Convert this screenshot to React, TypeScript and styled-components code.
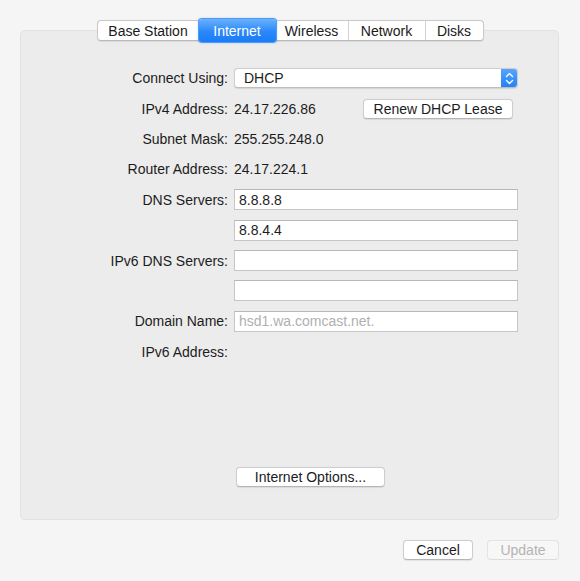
import React from "react";
import styled, { createGlobalStyle, css } from "styled-components";

const GlobalStyle = createGlobalStyle`
  html, body { margin: 0; padding: 0; background: #f5f5f5; }
  body {
    font-family: "Liberation Sans", Arial, sans-serif;
    font-size: 14px;
    color: #1c1c1c;
    -webkit-font-smoothing: antialiased;
  }
`;

const Window = styled.div`
  width: 580px;
  height: 581px;
  box-sizing: border-box;
  padding: 20px 21px 0 20px;
  display: flex;
  flex-direction: column;
  border-top: 1px solid #e6e6e6;
  margin-top: -1px;
`;

const TabBar = styled.div`
  align-self: center;
  margin-left: 1px;
  display: flex;
  height: 21px;
  box-sizing: border-box;
  background: #fff;
  border: 1px solid #c9c9c9;
  border-bottom-color: #b9b9b9;
  border-radius: 4px;
  position: relative;
  z-index: 1;
  box-shadow: 0 0.5px 1px rgba(0, 0, 0, 0.08);
`;

const Tab = styled.div<{ $w: number; $active?: boolean; $first?: boolean }>`
  width: ${(p) => p.$w}px;
  display: flex;
  align-items: center;
  justify-content: center;
  font-size: 14px;
  color: #1a1a1a;
  box-sizing: border-box;
  border-left: ${(p) => (p.$first ? "none" : "1px solid #d2d2d2")};
  ${(p) =>
    p.$active &&
    css`
      color: #fff;
      border-left: none;
      margin: -2px 0;
      border-radius: 3px;
      background: linear-gradient(#6bb1fb, #2a88fb 55%, #1b7cf6);
      box-shadow: 0 0 0 1px #4a9cf6, 0 0 2px 1px rgba(90, 160, 250, 0.45);
      position: relative;
    `}
`;

const Panel = styled.div`
  margin-top: -11px;
  height: 490px;
  box-sizing: border-box;
  background: #ececec;
  border: 1px solid #e2e2e2;
  border-radius: 5px;
  padding-top: 32px;
  display: flex;
  flex-direction: column;
`;

const Form = styled.div`
  display: grid;
  grid-template-columns: 207px 284px;
  grid-auto-rows: 30.4px;
  column-gap: 6px;
  align-items: center;
`;

const Label = styled.div`
  text-align: right;
  white-space: nowrap;
`;

const Value = styled.div`
  display: flex;
  align-items: center;
  white-space: nowrap;
`;

const Popup = styled.div`
  height: 20px;
  width: 284px;
  box-sizing: border-box;
  display: flex;
  align-items: center;
  background: #fff;
  border: 1px solid #cfcfcf;
  border-bottom-color: #bdbdbd;
  border-radius: 4px;
  box-shadow: 0 0.5px 1px rgba(0, 0, 0, 0.1);
  padding-left: 9px;
  position: relative;
  overflow: hidden;
`;

const PopupText = styled.span`
  flex: 1;
`;

const Stepper = styled.div`
  width: 17px;
  height: 20px;
  margin: -1px -1px -1px 0;
  background: linear-gradient(#5aa7fb, #1f80f7);
  border-radius: 0 4px 4px 0;
  display: flex;
  align-items: center;
  justify-content: center;
`;

const PushButton = styled.button<{ $w: number; $disabled?: boolean }>`
  width: ${(p) => p.$w}px;
  height: 20px;
  padding: 0;
  font-family: inherit;
  font-size: 14px;
  color: ${(p) => (p.$disabled ? "#b4b4b4" : "#1c1c1c")};
  background: ${(p) => (p.$disabled ? "#f7f7f7" : "#fff")};
  border: 1px solid ${(p) => (p.$disabled ? "#e3e3e3" : "#cdcdcd")};
  border-bottom-color: ${(p) => (p.$disabled ? "#dcdcdc" : "#b5b5b5")};
  border-radius: 4px;
  box-shadow: ${(p) => (p.$disabled ? "none" : "0 0.5px 1px rgba(0,0,0,0.08)")};
  line-height: 18px;
`;

const RenewButton = styled(PushButton)`
  margin-left: auto;
  margin-right: 5px;
`;

const Field = styled.div<{ $placeholder?: boolean }>`
  width: 284px;
  height: 21px;
  box-sizing: border-box;
  background: #fff;
  border: 1px solid #c6c6c6;
  border-top-color: #b8b8b8;
  padding-left: 4px;
  display: flex;
  align-items: center;
  color: ${(p) => (p.$placeholder ? "#b0b0b0" : "#1c1c1c")};
`;

const OptionsRow = styled.div`
  margin-top: 100px;
  padding-left: 215px;
  display: flex;
`;

const Footer = styled.div`
  margin-top: 20px;
  display: flex;
  justify-content: flex-end;
  gap: 14px;
`;

const StepperIcon = () => (
  <svg width="9" height="13" viewBox="0 0 9 13" fill="none">
    <path d="M1.5 4.5 L4.5 1.5 L7.5 4.5" stroke="#fff" strokeWidth="1.4" strokeLinecap="round" strokeLinejoin="round" />
    <path d="M1.5 8.5 L4.5 11.5 L7.5 8.5" stroke="#fff" strokeWidth="1.4" strokeLinecap="round" strokeLinejoin="round" />
  </svg>
);

const tabs = [
  { label: "Base Station", w: 101 },
  { label: "Internet", w: 77, active: true },
  { label: "Wireless", w: 72 },
  { label: "Network", w: 77 },
  { label: "Disks", w: 58 },
];

export default function App() {
  return (
    <>
      <GlobalStyle />
      <Window>
        <TabBar>
          {tabs.map((t, i) => (
            <Tab key={t.label} $w={t.w} $active={t.active} $first={i === 0 || tabs[i - 1].active}>
              {t.label}
            </Tab>
          ))}
        </TabBar>
        <Panel>
          <Form>
            <Label>Connect Using:</Label>
            <Value>
              <Popup>
                <PopupText>DHCP</PopupText>
                <Stepper>
                  <StepperIcon />
                </Stepper>
              </Popup>
            </Value>

            <Label>IPv4 Address:</Label>
            <Value>
              24.17.226.86
              <RenewButton $w={150}>Renew DHCP Lease</RenewButton>
            </Value>

            <Label>Subnet Mask:</Label>
            <Value>255.255.248.0</Value>

            <Label>Router Address:</Label>
            <Value>24.17.224.1</Value>

            <Label>DNS Servers:</Label>
            <Value>
              <Field>8.8.8.8</Field>
            </Value>

            <Label />
            <Value>
              <Field>8.8.4.4</Field>
            </Value>

            <Label>IPv6 DNS Servers:</Label>
            <Value>
              <Field />
            </Value>

            <Label />
            <Value>
              <Field />
            </Value>

            <Label>Domain Name:</Label>
            <Value>
              <Field $placeholder>hsd1.wa.comcast.net.</Field>
            </Value>

            <Label>IPv6 Address:</Label>
            <Value />
          </Form>
          <OptionsRow>
            <PushButton $w={149}>Internet Options...</PushButton>
          </OptionsRow>
        </Panel>
        <Footer>
          <PushButton $w={70}>Cancel</PushButton>
          <PushButton $w={72} $disabled>
            Update
          </PushButton>
        </Footer>
      </Window>
    </>
  );
}
